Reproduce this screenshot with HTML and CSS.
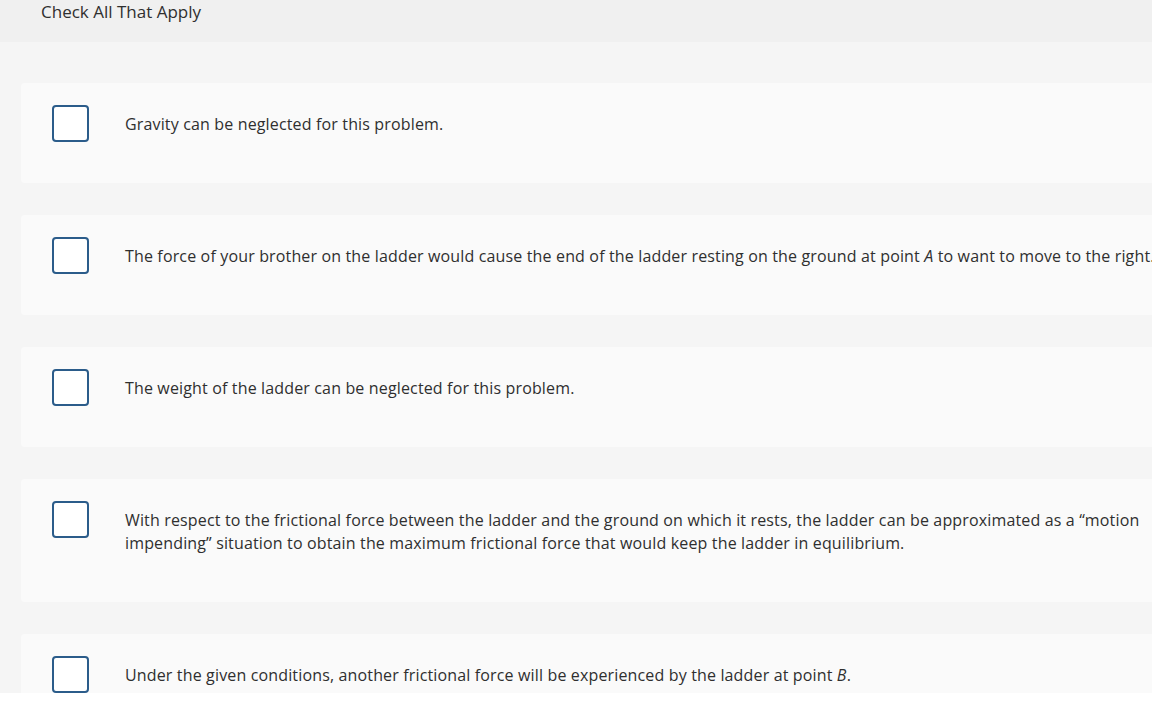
FILE: index.html
```html
<!DOCTYPE html>
<html>
<head>
<meta charset="utf-8">
<link rel="stylesheet" href="styles.css">
</head>
<body>
<div class="page">
  <div class="header">Check All That Apply</div>
  <div class="list">
    <div class="card">
      <div class="checkbox"></div>
      <div class="text">Gravity can be neglected for this problem.</div>
    </div>
    <div class="card">
      <div class="checkbox"></div>
      <div class="text">The force of your brother on the ladder would cause the end of the ladder resting on the ground at point <i>A</i> to want to move to the right.</div>
    </div>
    <div class="card">
      <div class="checkbox"></div>
      <div class="text">The weight of the ladder can be neglected for this problem.</div>
    </div>
    <div class="card">
      <div class="checkbox"></div>
      <div class="text">With respect to the frictional force between the ladder and the ground on which it rests, the ladder can be approximated as a “motion impending” situation to obtain the maximum frictional force that would keep the ladder in equilibrium.</div>
    </div>
    <div class="card">
      <div class="checkbox"></div>
      <div class="text">Under the given conditions, another frictional force will be experienced by the ladder at point <i>B</i>.</div>
    </div>
  </div>
</div>
</body>
</html>
```
FILE: styles.css
```css
html, body {
  margin: 0;
  padding: 0;
  background: #ffffff;
  overflow: hidden;
}
body {
  font-family: "Open Sans", "Liberation Sans", Arial, sans-serif;
  color: #2f2f2f;
  font-size: 16px;
}
.page {
  height: 693px;
  overflow: hidden;
  background: #f5f5f5;
}
.header {
  height: 42px;
  background: #f0f0f0;
  padding-left: 41px;
  font-size: 17px;
  line-height: 23px;
  box-sizing: border-box;
}
.list {
  display: flex;
  flex-direction: column;
  gap: 32px;
  padding: 41px 0 0 21px;
  width: 1200px;
}
.card {
  display: flex;
  align-items: flex-start;
  background: #fafafa;
  border-radius: 4px;
  padding: 22px 30px 41px 31px;
}
.checkbox {
  flex: none;
  width: 37px;
  height: 37px;
  box-sizing: border-box;
  border: 2px solid #2b5c8a;
  border-radius: 4px;
  background: #ffffff;
}
.text {
  margin-left: 36px;
  padding: 8px 0 6px;
  line-height: 23px;
  letter-spacing: 0.15px;
}
```
